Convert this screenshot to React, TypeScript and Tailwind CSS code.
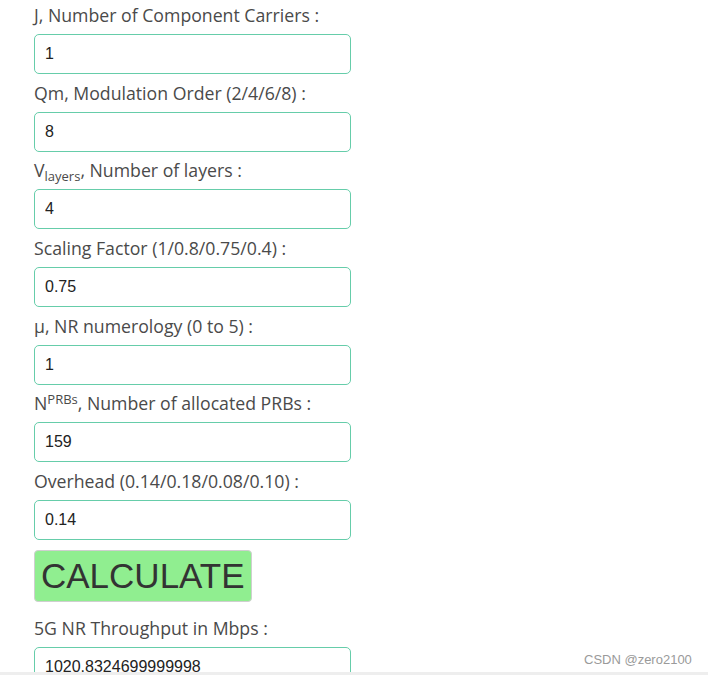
import React from "react";

const labelCls =
  "block text-[17.7px] leading-[22px] text-[#4a4a4a] mb-[8px] font-['Open_Sans',sans-serif]";
const inputCls =
  "block w-[317px] h-[40px] border border-[#66cdaa] rounded-[5px] px-[10px] text-[16px] text-[#222] bg-white outline-none font-['Liberation_Sans',Arial,sans-serif]";

function Field({ label, value, last }: { label: React.ReactNode; value: string; last?: boolean }) {
  return (
    <div className={last ? "" : "mb-[7.67px]"}>
      <label className={labelCls}>{label}</label>
      <input className={inputCls} defaultValue={value} />
    </div>
  );
}

export default function App() {
  return (
    <div className="relative w-[708px] h-[675px] overflow-hidden bg-white">
      <div className="pl-[34px] pt-[4px]">
        <Field label="J, Number of Component Carriers :" value="1" />
        <Field label="Qm, Modulation Order (2/4/6/8) :" value="8" />
        <Field
          label={
            <>
              V<sub className="text-[13px]">layers</sub>, Number of layers :
            </>
          }
          value="4"
        />
        <Field label="Scaling Factor (1/0.8/0.75/0.4) :" value="0.75" />
        <Field label="μ, NR numerology (0 to 5) :" value="1" />
        <Field
          label={
            <>
              N<sup className="text-[13px]">PRBs</sup>, Number of allocated PRBs :
            </>
          }
          value="159"
        />
        <Field label="Overhead (0.14/0.18/0.08/0.10) :" value="0.14" last />
        <button className="mt-[10px] block bg-[#90ee90] border border-[#cfcfcf] rounded-[4px] px-[6px] py-[5px] text-[35px] leading-[40px] text-[#333] font-['Liberation_Sans',Arial,sans-serif]">
          CALCULATE
        </button>
        <div className="mt-[15px]">
          <label className={labelCls}>5G NR Throughput in Mbps :</label>
          <input className={inputCls} defaultValue="1020.8324699999998" />
        </div>
      </div>
      <div className="absolute left-[584px] top-[651px] text-[13px] leading-[18px] text-[#9a9a9a] font-['Liberation_Sans',Arial,sans-serif]">
        CSDN @zero2100
      </div>
      <div className="absolute left-0 bottom-0 w-full h-[3px] bg-[#eeeeee]" />
    </div>
  );
}
